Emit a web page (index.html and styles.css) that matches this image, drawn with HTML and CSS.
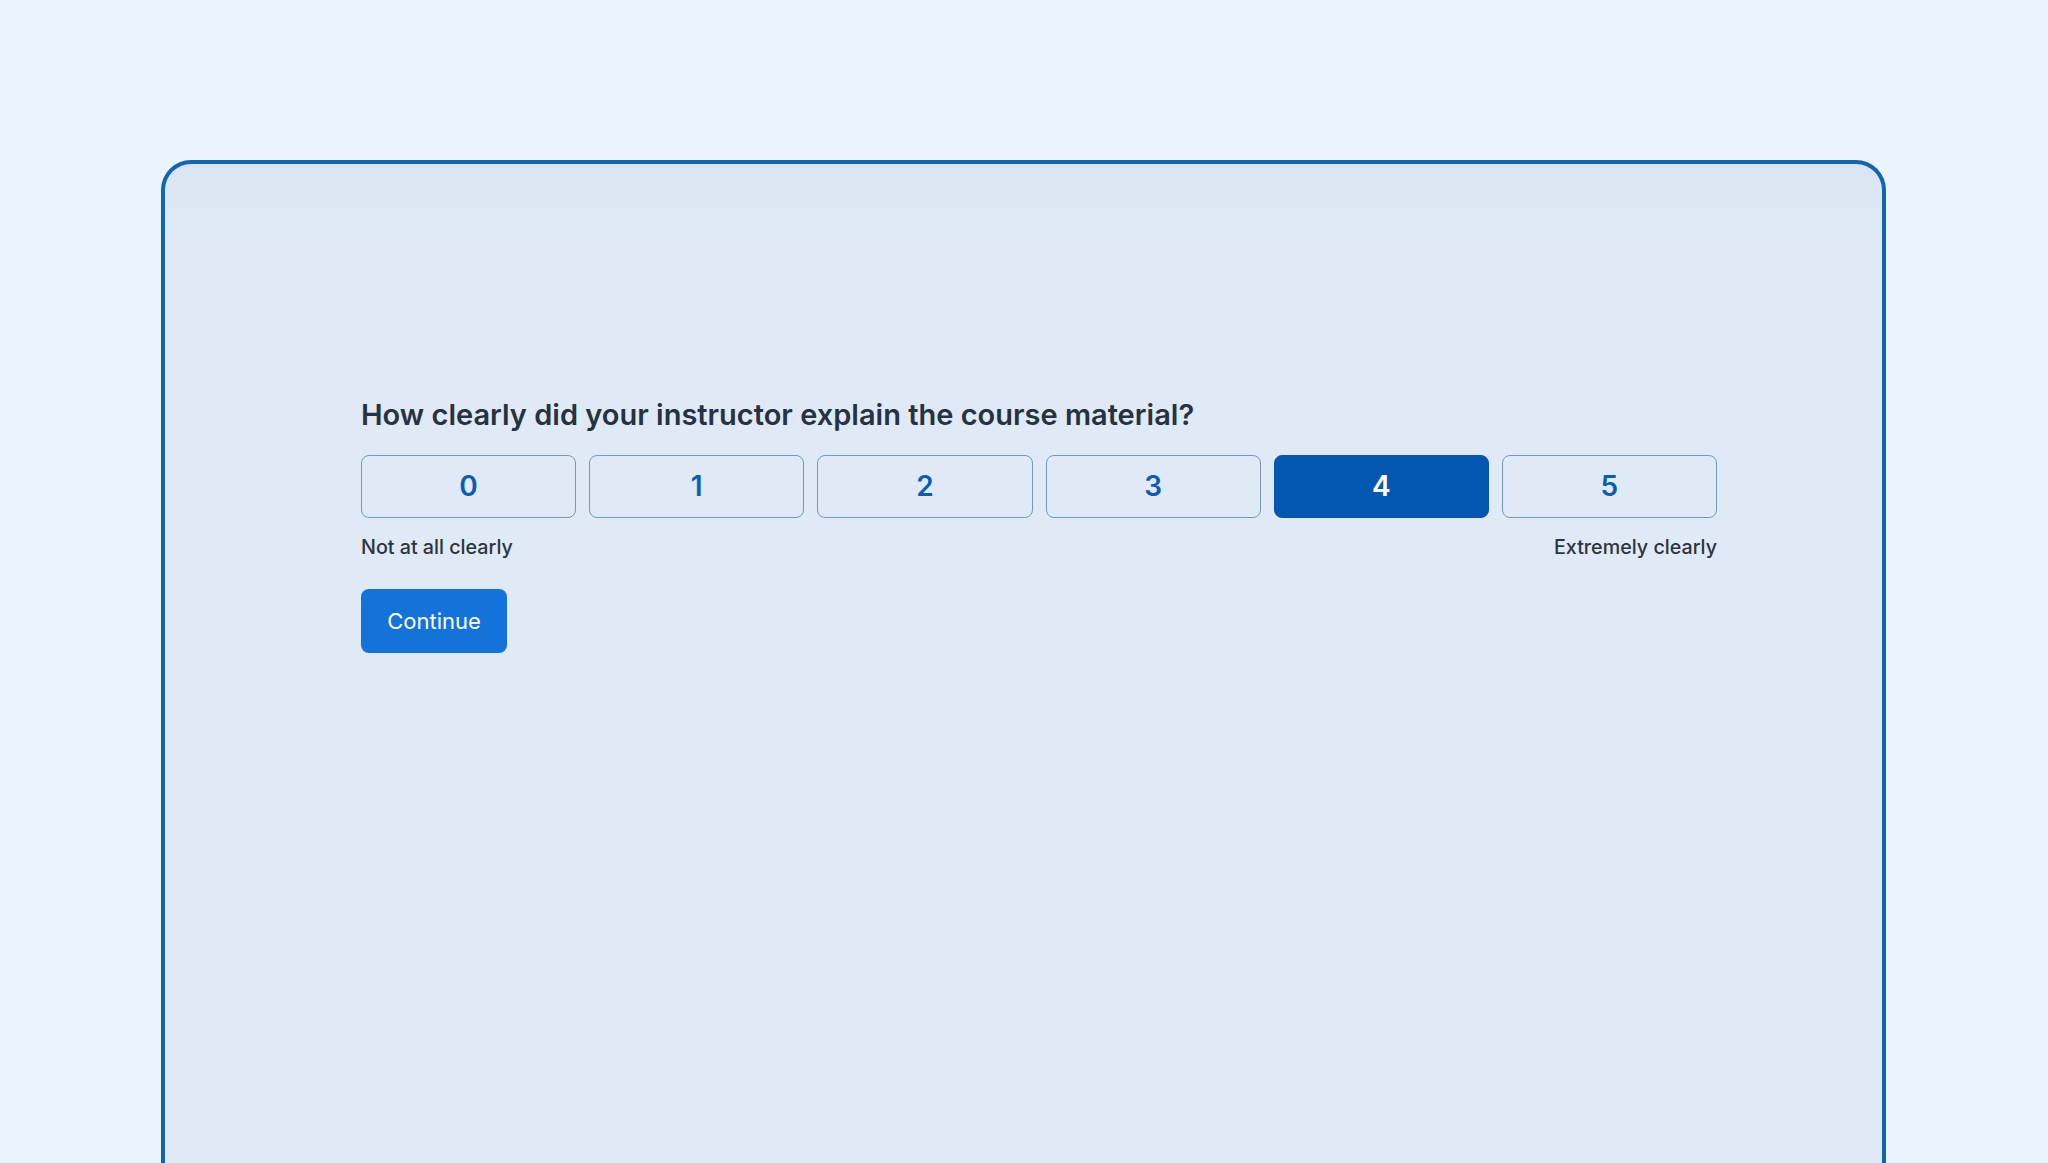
FILE: index.html
```html
<!DOCTYPE html>
<html lang="en">
<head>
    <meta charset="UTF-8">
    <meta name="viewport" content="width=device-width, initial-scale=1.0">
    <title>Course Feedback</title>
    <link rel="stylesheet" href="styles.css">
</head>
<body>
    <div class="frame">
        <div class="survey">
            <h1 class="question">How clearly did your instructor explain the course material?</h1>
            <div class="scale">
                <button class="option">0</button>
                <button class="option">1</button>
                <button class="option">2</button>
                <button class="option">3</button>
                <button class="option selected">4</button>
                <button class="option">5</button>
            </div>
            <div class="scale-labels">
                <span>Not at all clearly</span>
                <span>Extremely clearly</span>
            </div>
            <button class="continue">Continue</button>
        </div>
    </div>
</body>
</html>
```

FILE: styles.css
```css
body {
    margin: 0;
    background-color: #eaf4fe;
    font-family: Inter, "Noto Sans", sans-serif;
}
.frame {
    margin: 160px 0 0 161px;
    width: 1725px;
    height: calc(100vh - 160px);
    box-sizing: border-box;
    border: 4px solid #0f67b1;
    border-bottom: none;
    border-radius: 30px 30px 0 0;
    background: linear-gradient(#d9e5f2, #dfeaf6 80px);
    padding: 234px 166px 0 196px;
}
.survey {
    width: 1356px;
}
.question {
    margin: 0 0 22px;
    font-size: 29px;
    line-height: 1.2;
    font-weight: 600;
    color: #263241;
}
.scale {
    display: grid;
    grid-template-columns: repeat(6, 1fr);
    gap: 13px;
}
.option {
    height: 63px;
    border: 1.5px solid #7698c0;
    border-radius: 8px;
    background-color: transparent;
    color: #0c5cb3;
    font-family: inherit;
    font-size: 28px;
    font-weight: 600;
    cursor: pointer;
}
.option.selected {
    background-color: #0457b0;
    border-color: #0457b0;
    color: #fff;
}
.scale-labels {
    display: flex;
    justify-content: space-between;
    margin-top: 18px;
    font-size: 19.7px;
    line-height: 1.2;
    font-weight: 500;
    color: #2b3440;
}
.continue {
    margin-top: 30px;
    width: 146px;
    height: 64px;
    border: none;
    border-radius: 8px;
    background-color: #1373da;
    color: #fff;
    font-family: inherit;
    font-size: 22px;
    cursor: pointer;
}
```
